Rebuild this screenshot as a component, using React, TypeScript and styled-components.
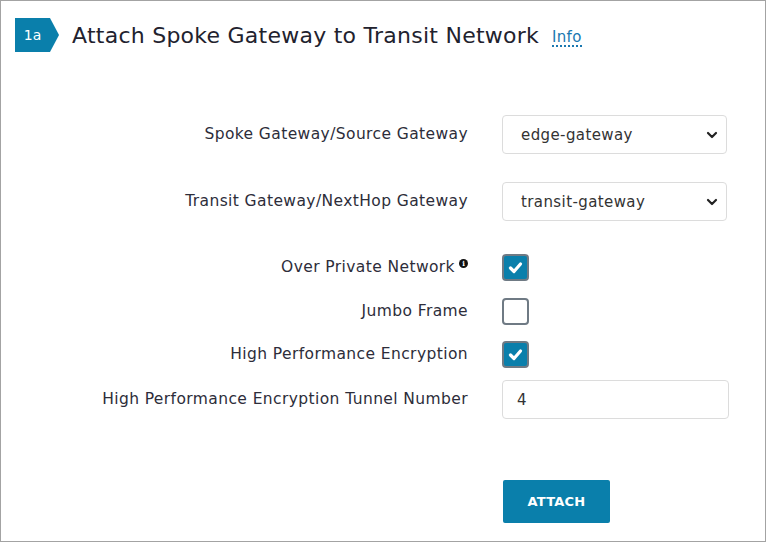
import styled, { createGlobalStyle } from "styled-components";

const GlobalStyle = createGlobalStyle`
  html, body {
    margin: 0;
    padding: 0;
    background: #ffffff;
  }
  body {
    font-family: "DejaVu Sans", "Noto Sans", sans-serif;
    color: #2d2d3a;
  }
`;

const Frame = styled.div`
  box-sizing: border-box;
  width: 766px;
  height: 542px;
  border: 1px solid #a3a3a3;
  background: #fff;
  padding: 17px 0 0 14px;
`;

const Header = styled.div`
  display: flex;
  align-items: center;
  height: 34px;
`;

const StepBadge = styled.div`
  position: relative;
  width: 35px;
  height: 34px;
  background: #0a7fab;
  color: #fff;
  font-size: 14px;
  display: flex;
  align-items: center;
  justify-content: center;
  margin-right: 22px;

  &::after {
    content: "";
    position: absolute;
    right: -9px;
    top: 0;
    border-top: 17px solid transparent;
    border-bottom: 17px solid transparent;
    border-left: 9px solid #0a7fab;
  }
`;

const Title = styled.h1`
  margin: 0;
  font-size: 22px;
  font-weight: 400;
  color: #22222e;
  letter-spacing: 0.25px;
`;

const InfoLink = styled.a`
  margin-left: 13px;
  margin-top: 6px;
  font-size: 15px;
  color: #1a78b0;
  text-decoration: none;
  border-bottom: 2px dotted #1a78b0;
  line-height: 16px;
  letter-spacing: 0.3px;
`;

const Form = styled.div`
  display: flex;
  flex-direction: column;
  margin-top: 63px;
`;

const Row = styled.div<{ $height: number }>`
  display: grid;
  grid-template-columns: 453px auto;
  column-gap: 34px;
  align-items: start;
  height: ${(p) => p.$height}px;
`;

const Label = styled.label<{ $offset?: number }>`
  justify-self: end;
  font-size: 15.5px;
  letter-spacing: 0.4px;
  color: #2d2d3a;
  padding-top: ${(p) => p.$offset ?? 0}px;
  white-space: nowrap;
`;

const SelectBox = styled.div`
  box-sizing: border-box;
  width: 225px;
  height: 39px;
  border: 1px solid #dcdcdc;
  border-radius: 4px;
  display: flex;
  align-items: center;
  justify-content: space-between;
  padding: 0 8px 0 18px;
  font-size: 15px;
  letter-spacing: 0.4px;
  color: #333;
`;

const TextInput = styled.div`
  box-sizing: border-box;
  width: 227px;
  height: 39px;
  border: 1px solid #dcdcdc;
  border-radius: 4px;
  display: flex;
  align-items: center;
  padding: 0 14px;
  font-size: 15px;
  color: #333;
`;

const Check = styled.div<{ $checked: boolean }>`
  box-sizing: border-box;
  width: 27px;
  height: 27px;
  border-radius: 4px;
  border: 2px solid #6f7a84;
  background: ${(p) => (p.$checked ? "#0a7fab" : "#fff")};
  display: flex;
  align-items: center;
  justify-content: center;
`;

const InfoDot = styled.span`
  display: inline-flex;
  align-items: center;
  justify-content: center;
  width: 9px;
  height: 9px;
  border-radius: 50%;
  background: #111;
  color: #fff;
  font-size: 7px;
  font-weight: 700;
  font-family: "DejaVu Serif", serif;
  vertical-align: top;
  margin-left: 4px;
  margin-top: 1px;
  letter-spacing: 0;
`;

const AttachButton = styled.button`
  width: 107px;
  height: 43px;
  border: none;
  border-radius: 2px;
  background: #0a7fab;
  color: #fff;
  font-family: "DejaVu Sans", sans-serif;
  font-weight: 700;
  font-size: 13px;
  letter-spacing: 0.2px;
  margin-left: 1px;
`;

function Chevron() {
  return (
    <svg width="12" height="8" viewBox="0 0 12 8">
      <path d="M2 2 L6 6 L10 2" fill="none" stroke="#222" strokeWidth="2.2" strokeLinecap="round" strokeLinejoin="round" />
    </svg>
  );
}

function CheckMark() {
  return (
    <svg width="15" height="13" viewBox="0 0 15 13">
      <path d="M2.5 7 L6 10.5 L12.5 3" fill="none" stroke="#fff" strokeWidth="3.2" strokeLinecap="round" strokeLinejoin="round" />
    </svg>
  );
}

export default function App() {
  return (
    <>
      <GlobalStyle />
      <Frame>
        <Header>
          <StepBadge>1a</StepBadge>
          <Title>Attach Spoke Gateway to Transit Network</Title>
          <InfoLink>Info</InfoLink>
        </Header>
        <Form>
          <Row $height={67}>
            <Label $offset={10}>Spoke Gateway/Source Gateway</Label>
            <SelectBox>
              edge-gateway
              <Chevron />
            </SelectBox>
          </Row>
          <Row $height={72}>
            <Label $offset={10}>Transit Gateway/NextHop Gateway</Label>
            <SelectBox>
              transit-gateway
              <Chevron />
            </SelectBox>
          </Row>
          <Row $height={44}>
            <Label $offset={4}>
              Over Private Network
              <InfoDot>i</InfoDot>
            </Label>
            <Check $checked>
              <CheckMark />
            </Check>
          </Row>
          <Row $height={43}>
            <Label $offset={4}>Jumbo Frame</Label>
            <Check $checked={false} />
          </Row>
          <Row $height={39}>
            <Label $offset={4}>High Performance Encryption</Label>
            <Check $checked>
              <CheckMark />
            </Check>
          </Row>
          <Row $height={100}>
            <Label $offset={10}>High Performance Encryption Tunnel Number</Label>
            <TextInput>4</TextInput>
          </Row>
          <Row $height={43}>
            <span />
            <AttachButton>ATTACH</AttachButton>
          </Row>
        </Form>
      </Frame>
    </>
  );
}
